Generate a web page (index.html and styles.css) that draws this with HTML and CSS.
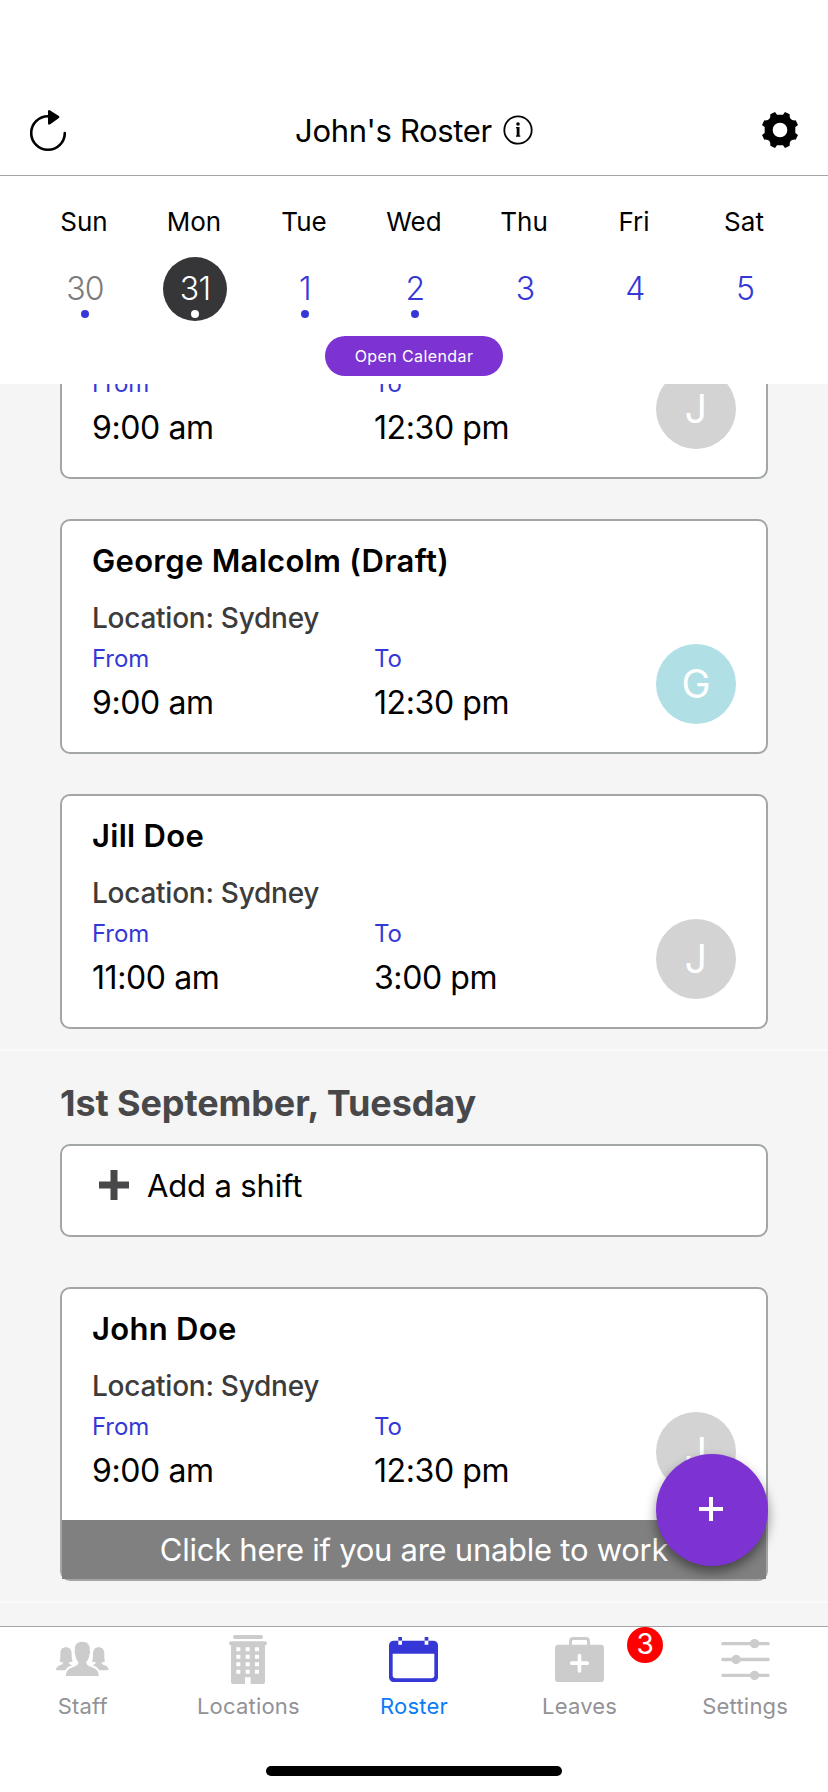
FILE: index.html
```html
<!DOCTYPE html>
<html lang="en">
<head>
<meta charset="UTF-8">
<title>John's Roster</title>
<link rel="stylesheet" href="styles.css">
</head>
<body>
    <div class="screen">
        <header class="header">
            <svg class="refresh" viewBox="0 0 36 43" width="36" height="43">
                <path d="M18 7.2A16.8 16.8 0 1 0 34.8 24" fill="none" stroke="#000" stroke-width="2.6" stroke-linecap="round"/>
                <path d="M19.2 2.2v12.2l9-6.4z" stroke="#000" stroke-width="2.4" stroke-linejoin="round"/>
            </svg>
            <div class="title">
                <h1>John's Roster</h1>
                <svg class="info" viewBox="0 0 30 30" width="30" height="30">
                    <circle cx="15" cy="15" r="13.7" fill="none" stroke="#000" stroke-width="1.8"/>
                    <circle cx="15" cy="9" r="1.8"/>
                    <path d="M13 12h3.500v8.600h.8v1.200H13v-1.200h.7v-7.400H13z"/>
                </svg>
            </div>
            <svg class="gear" viewBox="-54 -54 108 108" width="36" height="36">
                <path fill-rule="evenodd" d="M0-46L9-46L15-54L29-47Q27-27 47-29L54-15L46-9V9L54 15L47 29Q27 27 29 47L15 54L9 46H-9L-15 54L-29 47Q-27 27-47 29L-54 15L-46 9V-9L-54-15L-47-29Q-27-27-29-47L-15-54L-9-46ZM22 0A22 22 0 1 0-22 0A22 22 0 1 0 22 0Z"/>
            </svg>
        </header>

        <section class="calendar">
            <div class="week">
                <div class="day"><span class="name">Sun</span><span class="date past dot">30</span></div>
                <div class="day"><span class="name">Mon</span><span class="date selected dot">31</span></div>
                <div class="day"><span class="name">Tue</span><span class="date dot">1</span></div>
                <div class="day"><span class="name">Wed</span><span class="date dot">2</span></div>
                <div class="day"><span class="name">Thu</span><span class="date">3</span></div>
                <div class="day"><span class="name">Fri</span><span class="date">4</span></div>
                <div class="day"><span class="name">Sat</span><span class="date">5</span></div>
            </div>
            <button class="open-calendar">Open Calendar</button>
        </section>

        <main class="list">
            <section class="group first">
                <div class="card scrolled">
                    <div class="times">
                        <div class="time"><span class="label">From</span><span class="hour">9:00 am</span></div>
                        <div class="time"><span class="label">To</span><span class="hour">12:30 pm</span></div>
                        <div class="avatar">J</div>
                    </div>
                </div>
                <div class="card">
                    <h3>George Malcolm (Draft)</h3>
                    <p class="location">Location: Sydney</p>
                    <div class="times">
                        <div class="time"><span class="label">From</span><span class="hour">9:00 am</span></div>
                        <div class="time"><span class="label">To</span><span class="hour">12:30 pm</span></div>
                        <div class="avatar teal">G</div>
                    </div>
                </div>
                <div class="card">
                    <h3>Jill Doe</h3>
                    <p class="location">Location: Sydney</p>
                    <div class="times">
                        <div class="time"><span class="label">From</span><span class="hour">11:00 am</span></div>
                        <div class="time"><span class="label">To</span><span class="hour">3:00 pm</span></div>
                        <div class="avatar">J</div>
                    </div>
                </div>
            </section>

            <section class="group">
                <h2>1st September, Tuesday</h2>
                <div class="add-shift">
                    <svg viewBox="0 0 30 30" width="30" height="30"><path d="M11.5 0h7v11.5H30v7H18.5V30h-7V18.5H0v-7h11.5z" fill="#48484a"/></svg>
                    <span>Add a shift</span>
                </div>
                <div class="card tall">
                    <h3>John Doe</h3>
                    <p class="location">Location: Sydney</p>
                    <div class="times">
                        <div class="time"><span class="label">From</span><span class="hour">9:00 am</span></div>
                        <div class="time"><span class="label">To</span><span class="hour">12:30 pm</span></div>
                        <div class="avatar">J</div>
                    </div>
                    <div class="unable">Click here if you are unable to work</div>
                </div>
            </section>
        </main>

        <nav class="tabs">
            <div class="tab">
                <div class="icon">
                    <svg viewBox="165 425 165 108" width="55" height="36" fill="#ccc">
                        <path d="M198 530C198 512 206 508 222 502C232 498 235 496 235 488C229 480 227 474 226 466C223 460 223 455 225 454C222 436 232 427 247 427C262 427 271 436 269 454C271 455 271 460 268 466C267 474 265 480 259 488C259 496 262 498 272 502C288 508 296 512 296 530Z"/>
                        <path id="side" d="M168 513C168 501 176 499 184 496C190 494 190 491 188 489C184 489 180 487 179 485C182 478 181 470 181 462C181 450 188 444 198 444C208 444 214 450 215 462C215 470 214 478 218 485C214 488 210 489 207 489C206 493 208 495 217 498C208 501 200 505 196 513Z"/>
                        <use href="#side" transform="translate(494 0) scale(-1 1)"/>
                    </svg>
                </div>
                <span>Staff</span>
            </div>
            <div class="tab">
                <div class="icon">
                    <svg viewBox="687 404 114 147" width="38" height="49">
                        <rect x="699" y="404" width="90" height="12" rx="6" fill="#ccc"/>
                        <rect x="687" y="423" width="114" height="12" rx="6" fill="#ccc"/>
                        <path d="M693 430H795V545Q795 551 789 551H752V531H735V551H699Q693 551 693 545Z" fill="#ccc"/>
                        <path d="M715 441V520M743 441V520M771 441V520" stroke="#fff" stroke-width="12" stroke-dasharray="12 10.5"/>
                    </svg>
                </div>
                <span>Locations</span>
            </div>
            <div class="tab active">
                <div class="icon">
                    <svg viewBox="327 111 147 135" width="49" height="45">
                        <rect x="327" y="122" width="147" height="124" rx="14" fill="#3538d6"/>
                        <path d="M338 161H463V226Q463 235 454 235H347Q338 235 338 226Z" fill="#fff"/>
                        <path d="M360.500 111V122M439.500 111V122" stroke="#3538d6" stroke-width="11"/>
                        <path d="M360.500 122V134M439.500 122V134" stroke="#fff" stroke-width="11"/>
                    </svg>
                </div>
                <span>Roster</span>
            </div>
            <div class="tab">
                <div class="icon">
                    <svg viewBox="105 111 147 135" width="49" height="45">
                        <rect x="105" y="134" width="147" height="112" rx="10" fill="#ccc"/>
                        <path d="M151.500 136V124Q151.500 115.500 160 115.500H197Q205.500 115.500 205.500 124V136" fill="none" stroke="#ccc" stroke-width="9"/>
                        <path d="M178.500 167V213M155.500 189.500H201.500" stroke="#fff" stroke-width="11" stroke-linecap="round"/>
                    </svg>
                    <span class="badge">3</span>
                </div>
                <span>Leaves</span>
            </div>
            <div class="tab">
                <div class="icon">
                    <svg viewBox="600 116 147 124" width="49" height="41" fill="#ccc">
                        <path d="M605 130H742M605 178H742M605 226H742" stroke="#ccc" stroke-width="10" stroke-linecap="round"/>
                        <circle cx="701" cy="130" r="14"/>
                        <circle cx="645" cy="178" r="14"/>
                        <circle cx="701" cy="226" r="14"/>
                    </svg>
                </div>
                <span>Settings</span>
            </div>
        </nav>

        <button class="fab">
            <svg viewBox="0 0 24 24" width="24" height="24"><path d="M12 0v24M0 12h24" stroke="#fff" stroke-width="4"/></svg>
        </button>
        <div class="home-bar"></div>
    </div>
</body>
</html>
```

FILE: styles.css
```css
* {
    box-sizing: border-box;
}
body {
    margin: 0;
    font-family: Inter, "Liberation Sans", sans-serif;
    color: #000;
}
h1, h2, h3, p {
    margin: 0;
}
button {
    border: none;
    padding: 0;
    font-family: inherit;
    background-color: #7d33d2;
    color: white;
}
svg {
    display: block;
}
.screen {
    position: relative;
    display: flex;
    flex-direction: column;
    width: 828px;
    height: 1792px;
    overflow: hidden;
    background-color: white;
}

/* header */
.header {
    display: flex;
    justify-content: space-between;
    align-items: center;
    height: 176px;
    padding: 87px 30px 0;
    border-bottom: 1px solid #a2a6a5;
}
.refresh {
    margin-top: -2px;
}
.gear {
    margin-top: -2px;
}
.title {
    display: flex;
    align-items: center;
    gap: 11px;
    margin-top: -1px;
}
.title h1 {
    font-size: 31px;
    font-weight: 400;
    letter-spacing: -0.35px;
}
.info {
    margin-top: -2px;
}

/* week strip */
.calendar {
    display: flex;
    flex-direction: column;
    align-items: center;
    height: 208px;
    padding: 26px 29px 0;
}
.week {
    display: grid;
    grid-template-columns: repeat(7, 1fr);
    width: 100%;
}
.day {
    display: flex;
    flex-direction: column;
    align-items: center;
    gap: 15px;
}
.name {
    font-size: 26px;
    line-height: 40px;
}
.date {
    position: relative;
    width: 64px;
    height: 64px;
    margin-left: 2px;
    border-radius: 50%;
    font-size: 32px;
    font-weight: 300;
    line-height: 64px;
    text-align: center;
    letter-spacing: -0.8px;
    color: #3538d6;
}
.past {
    color: #7c7c7c;
}
.selected {
    background-color: #363638;
    color: white;
}
.dot::after {
    content: "";
    position: absolute;
    left: 28px;
    bottom: 3px;
    width: 8px;
    height: 8px;
    border-radius: 50%;
    background-color: #3538d6;
}
.selected::after {
    background-color: white;
}
.open-calendar {
    width: 178px;
    height: 40px;
    margin-top: 15px;
    border-radius: 20px;
    font-size: 16px;
    letter-spacing: 0.4px;
}

/* shifts */
.list {
    flex: 1;
    overflow: hidden;
    background-color: #f5f5f5;
}
.group {
    padding: 0 60px 20px;
    border-bottom: 2px solid #fafafa;
}
.first {
    margin-top: -27px;
}
.card {
    height: 235px;
    padding: 20px 30px 0;
    border: 2px solid #a2a6a5;
    border-radius: 10px;
    background-color: white;
}
.card + .card {
    margin-top: 40px;
}
.card.scrolled {
    height: 122px;
    padding-top: 1px;
}
.card h3 {
    font-size: 31px;
    font-weight: 600;
    line-height: 40px;
    letter-spacing: 0.3px;
}
.location {
    margin-top: 19px;
    font-size: 28px;
    font-weight: 500;
    line-height: 36px;
    letter-spacing: -0.25px;
    color: #3c3c3c;
}
.times {
    display: flex;
    height: 80px;
    margin-top: 8px;
}
.scrolled .times {
    margin-top: 9px;
}
.time {
    display: flex;
    flex-direction: column;
    gap: 9px;
    width: 282px;
}
.label {
    font-size: 24px;
    line-height: 30px;
    letter-spacing: -0.1px;
    color: #3538d6;
}
.hour {
    font-size: 32px;
    line-height: 40px;
    letter-spacing: -0.4px;
    white-space: nowrap;
}
.time + .time {
    width: auto;
}
.avatar {
    width: 80px;
    height: 80px;
    margin-left: auto;
    border-radius: 50%;
    background-color: #d3d3d3;
    color: white;
    font-size: 39px;
    line-height: 80px;
    text-align: center;
}
.teal {
    background-color: #b0dfe5;
}
.group h2 {
    padding-top: 30px;
    font-size: 36px;
    font-weight: 700;
    line-height: 44px;
    letter-spacing: -0.1px;
    color: #48484a;
}
.add-shift {
    display: flex;
    align-items: center;
    gap: 18px;
    height: 93px;
    margin: 19px 0 50px;
    padding: 0 37px 11px;
    border: 2px solid #a2a6a5;
    border-radius: 10px;
    background-color: white;
    font-size: 31px;
    letter-spacing: -0.15px;
}
.tall {
    height: 294px;
}
.unable {
    height: 59px;
    margin: 28px -30px 0;
    background-color: #808080;
    color: white;
    font-size: 31px;
    line-height: 59px;
    letter-spacing: -0.27px;
    text-align: center;
}

/* bottom tabs */
.tabs {
    display: grid;
    grid-template-columns: repeat(5, 1fr);
    height: 166px;
    padding-top: 7px;
    border-top: 1px solid #a5a5a7;
}
.tab {
    display: flex;
    flex-direction: column;
    align-items: center;
    font-size: 22px;
    line-height: 26px;
    letter-spacing: 0.2px;
    color: #929297;
}
.active {
    color: #0b7cf7;
}
.icon {
    position: relative;
    display: flex;
    align-items: center;
    height: 50px;
    margin-bottom: 9px;
}
.badge {
    position: absolute;
    left: 72px;
    top: -7px;
    width: 36px;
    height: 36px;
    border-radius: 50%;
    background-color: #fe0000;
    color: white;
    font-size: 28px;
    line-height: 35px;
    text-align: center;
    letter-spacing: 0;
}
.fab {
    position: absolute;
    right: 60px;
    top: 1454px;
    display: flex;
    justify-content: center;
    align-items: center;
    width: 112px;
    height: 112px;
    padding: 0 3px 2px 0;
    border-radius: 50%;
    box-shadow: 0 6px 12px rgba(0, 0, 0, 0.45);
}
.home-bar {
    position: absolute;
    left: 266px;
    bottom: 16px;
    width: 296px;
    height: 10px;
    border-radius: 5px;
    background-color: black;
}
```
